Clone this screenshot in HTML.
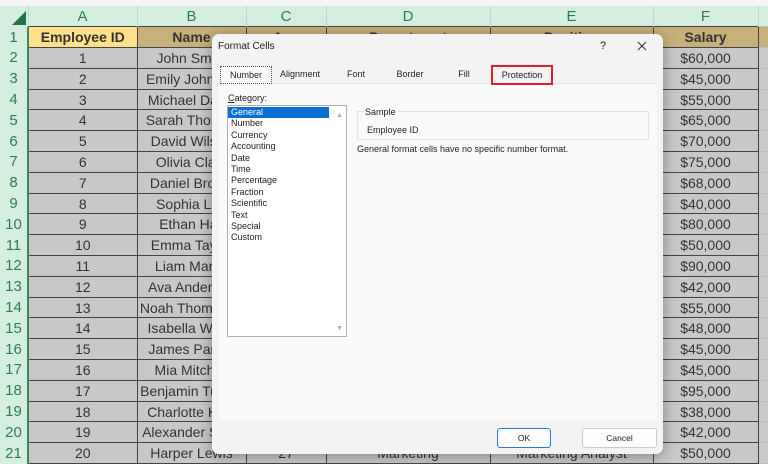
<!DOCTYPE html>
<html><head><style>
body{margin:0;width:768px;height:463px;overflow:hidden;background:#f3f3f3;font-family:"Liberation Sans",sans-serif;position:relative}
.abs{position:absolute}
table{border-collapse:collapse;table-layout:fixed;position:absolute;left:0;top:6px;width:778px}
td{padding:0;text-align:center;overflow:hidden;white-space:nowrap;font-size:14px;color:#333;border:1px solid #444;background:#c8c8c8}
tr{height:20.8px}
tr.h td{background:#d4efe0;color:#2e7d4f;font-size:15px;border:none;border-right:1px solid #b9d9c6;height:20px}
td.rh{background:#d4efe0;color:#2e7d4f;border:none;border-right:2px solid #3b8a5c;font-size:15px}
tr.r1 td{background:#c8b07a;font-weight:bold;color:#333}
tr.r1 td.a{background:#fde08a}
tr.r1 td.rh{background:#d4efe0;font-weight:normal;color:#2e7d4f}
td.x{background:#c9c9c9;border:1px solid #bdbdbd}
.dlg{left:212px;top:34px;width:451px;height:420px;background:#f3f3f3;border-radius:7px;box-shadow:0 2px 14px rgba(0,0,0,.35);font-size:9px;color:#222}
.tab{position:absolute;top:32px;height:17px;line-height:17px;text-align:center;font-size:9px}
.lst div{height:11.4px;line-height:11.4px;padding-left:3px;font-size:9px}
</style></head><body>
<table>
<colgroup><col style="width:28px"><col style="width:109px"><col style="width:109px"><col style="width:80px"><col style="width:164px"><col style="width:163px"><col style="width:105px"><col style="width:20px"></colgroup>
<tr class="h"><td style="background:#d4efe0;position:relative"><div class="abs" style="right:2px;bottom:2px;width:0;height:0;border-left:14px solid transparent;border-bottom:14px solid #217346"></div></td><td>A</td><td>B</td><td>C</td><td>D</td><td>E</td><td>F</td><td></td></tr>
<tr class="r1"><td class="rh">1</td><td class="a">Employee ID</td><td>Name</td><td>Age</td><td>Department</td><td>Position</td><td>Salary</td><td class="x"></td></tr>
<tr><td class="rh">2</td><td>1</td><td>John Smith</td><td></td><td></td><td></td><td>$60,000</td><td class="x"></td></tr>
<tr><td class="rh">3</td><td>2</td><td>Emily Johnson</td><td></td><td></td><td></td><td>$45,000</td><td class="x"></td></tr>
<tr><td class="rh">4</td><td>3</td><td>Michael Davis</td><td></td><td></td><td></td><td>$55,000</td><td class="x"></td></tr>
<tr><td class="rh">5</td><td>4</td><td>Sarah Thomas</td><td></td><td></td><td></td><td>$65,000</td><td class="x"></td></tr>
<tr><td class="rh">6</td><td>5</td><td>David Wilson</td><td></td><td></td><td></td><td>$70,000</td><td class="x"></td></tr>
<tr><td class="rh">7</td><td>6</td><td>Olivia Clark</td><td></td><td></td><td></td><td>$75,000</td><td class="x"></td></tr>
<tr><td class="rh">8</td><td>7</td><td>Daniel Brown</td><td></td><td></td><td></td><td>$68,000</td><td class="x"></td></tr>
<tr><td class="rh">9</td><td>8</td><td>Sophia Lee</td><td></td><td></td><td></td><td>$40,000</td><td class="x"></td></tr>
<tr><td class="rh">10</td><td>9</td><td>Ethan Hall</td><td></td><td></td><td></td><td>$80,000</td><td class="x"></td></tr>
<tr><td class="rh">11</td><td>10</td><td>Emma Taylor</td><td></td><td></td><td></td><td>$50,000</td><td class="x"></td></tr>
<tr><td class="rh">12</td><td>11</td><td>Liam Martin</td><td></td><td></td><td></td><td>$90,000</td><td class="x"></td></tr>
<tr><td class="rh">13</td><td>12</td><td>Ava Anderson</td><td></td><td></td><td></td><td>$42,000</td><td class="x"></td></tr>
<tr><td class="rh">14</td><td>13</td><td>Noah Thompson</td><td></td><td></td><td></td><td>$55,000</td><td class="x"></td></tr>
<tr><td class="rh">15</td><td>14</td><td>Isabella White</td><td></td><td></td><td></td><td>$48,000</td><td class="x"></td></tr>
<tr><td class="rh">16</td><td>15</td><td>James Parker</td><td></td><td></td><td></td><td>$45,000</td><td class="x"></td></tr>
<tr><td class="rh">17</td><td>16</td><td>Mia Mitchell</td><td></td><td></td><td></td><td>$45,000</td><td class="x"></td></tr>
<tr><td class="rh">18</td><td>17</td><td>Benjamin Turner</td><td></td><td></td><td></td><td>$95,000</td><td class="x"></td></tr>
<tr><td class="rh">19</td><td>18</td><td>Charlotte King</td><td></td><td></td><td></td><td>$38,000</td><td class="x"></td></tr>
<tr><td class="rh">20</td><td>19</td><td>Alexander Scott</td><td></td><td></td><td></td><td>$42,000</td><td class="x"></td></tr>
<tr><td class="rh">21</td><td>20</td><td>Harper Lewis</td><td>27</td><td>Marketing</td><td>Marketing Analyst</td><td>$50,000</td><td class="x"></td></tr>
</table>
<div class="abs" style="left:0;top:0;width:768px;height:6px;background:#f5f5f5"></div>

<div class="abs dlg">
  <div class="abs" style="left:6px;top:7px;font-size:10px">Format Cells</div>
  <div class="abs" style="left:388px;top:6px;font-size:11px">?</div>
  <svg class="abs" style="left:425px;top:7px" width="10" height="10"><path d="M1 1L9 9M9 1L1 9" stroke="#333" stroke-width="1.1"/></svg>
  <div class="abs" style="left:7px;top:49px;width:438px;height:336px;background:#fafafa;border-top:1px solid #e6e6e6"></div>
  <div class="tab" style="left:8px;width:50px;border:1px dotted #555;background:#fafafa;height:16px">Number</div>
  <div class="tab" style="left:62px;width:52px">Alignment</div>
  <div class="tab" style="left:118px;width:52px">Font</div>
  <div class="tab" style="left:172px;width:52px">Border</div>
  <div class="tab" style="left:226px;width:52px">Fill</div>
  <div class="tab" style="left:279px;width:58px;border:2px solid #e0202a;top:31px;height:16px;line-height:16px">Protection</div>
  <div class="abs" style="left:16px;top:59px"><u>C</u>ategory:</div>
  <div class="abs lst" style="left:15px;top:71px;width:118px;height:230px;border:1px solid #adadad;background:#fff">
    <div style="background:#0a6ed1;color:#fff;width:98px;margin-top:1px">General</div>
    <div>Number</div><div>Currency</div><div>Accounting</div><div>Date</div><div>Time</div><div>Percentage</div><div>Fraction</div><div>Scientific</div><div>Text</div><div>Special</div><div>Custom</div>
    <div class="abs" style="right:3px;top:4px;font-size:7px;color:#aaa;padding:0">▲</div>
    <div class="abs" style="right:3px;bottom:2px;font-size:7px;color:#aaa;padding:0">▼</div>
  </div>
  <div class="abs" style="left:145px;top:77px;width:290px;height:27px;border:1px solid #e2e2e2"></div>
  <div class="abs" style="left:151px;top:73px;background:#fafafa;padding:0 2px">Sample</div>
  <div class="abs" style="left:155px;top:91px">Employee ID</div>
  <div class="abs" style="left:145px;top:110px">General format cells have no specific number format.</div>
  <div class="abs" style="left:285px;top:394px;width:52px;height:18px;line-height:18px;text-align:center;border:1px solid #2b7bd4;border-radius:3px;background:#fdfdfd;font-size:8.5px">OK</div>
  <div class="abs" style="left:370px;top:394px;width:73px;height:18px;line-height:18px;text-align:center;border:1px solid #ccc;border-radius:3px;background:#fdfdfd;font-size:8.5px">Cancel</div>
</div>
</body></html>
